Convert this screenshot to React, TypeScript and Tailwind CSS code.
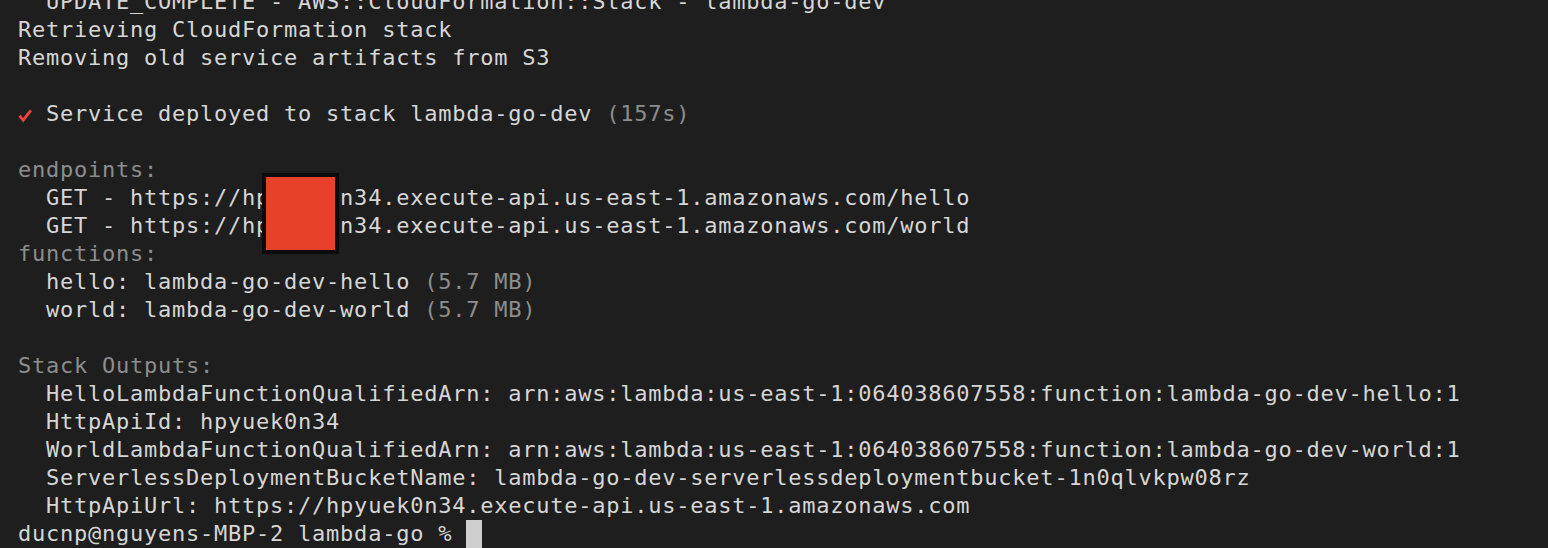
type Seg = { text: string; dim?: boolean };
type Line = { segs: Seg[]; check?: boolean };

const url = "https://hpyuek0n34.execute-api.us-east-1.amazonaws.com";

const lines: Line[] = [
  { segs: [{ text: "  UPDATE_COMPLETE - AWS::CloudFormation::Stack - lambda-go-dev" }] },
  { segs: [{ text: "Retrieving CloudFormation stack" }] },
  { segs: [{ text: "Removing old service artifacts from S3" }] },
  { segs: [] },
  { check: true, segs: [{ text: " Service deployed to stack lambda-go-dev " }, { text: "(157s)", dim: true }] },
  { segs: [] },
  { segs: [{ text: "endpoints:", dim: true }] },
  { segs: [{ text: `  GET - ${url}/hello` }] },
  { segs: [{ text: `  GET - ${url}/world` }] },
  { segs: [{ text: "functions:", dim: true }] },
  { segs: [{ text: "  hello: lambda-go-dev-hello " }, { text: "(5.7 MB)", dim: true }] },
  { segs: [{ text: "  world: lambda-go-dev-world " }, { text: "(5.7 MB)", dim: true }] },
  { segs: [] },
  { segs: [{ text: "Stack Outputs:", dim: true }] },
  { segs: [{ text: "  HelloLambdaFunctionQualifiedArn: arn:aws:lambda:us-east-1:064038607558:function:lambda-go-dev-hello:1" }] },
  { segs: [{ text: "  HttpApiId: hpyuek0n34" }] },
  { segs: [{ text: "  WorldLambdaFunctionQualifiedArn: arn:aws:lambda:us-east-1:064038607558:function:lambda-go-dev-world:1" }] },
  { segs: [{ text: "  ServerlessDeploymentBucketName: lambda-go-dev-serverlessdeploymentbucket-1n0qlvkpw08rz" }] },
  { segs: [{ text: `  HttpApiUrl: ${url}` }] },
];

const CheckMark = () => (
  <span className="inline-block w-[14px] h-[28px] align-top relative">
    <svg viewBox="0 0 14 14" className="absolute left-0 top-[9px] w-[14px] h-[14px]">
      <path d="M0.3 7.6 L2.9 5.7 L5 8.9 L11.8 0.6 L14 2.3 L5.2 13.4 Z" fill="#e8433d" />
    </svg>
  </span>
);

const App = () => {
  return (
    <div
      className="relative w-full h-[548px] overflow-hidden bg-[#1e1e1e] text-[#d6d6d6]"
      style={{ fontFamily: '"DejaVu Sans Mono", "Liberation Mono", monospace' }}
    >
      <div className="-mt-[12px] pl-[18px] text-[22px] leading-[28px] tracking-[0.76px] whitespace-pre">
        {lines.map((line, i) => (
          <div key={i} className="h-[28px]">
            {line.check && <CheckMark />}
            {line.segs.map((s, j) => (
              <span key={j} className={s.dim ? "text-[#8d8d8d]" : ""}>
                {s.text}
              </span>
            ))}
          </div>
        ))}
        <div className="h-[28px] flex items-stretch">
          <span>ducnp@nguyens-MBP-2 lambda-go % </span>
          <span className="w-[16px] bg-[#cfcfcf]" />
        </div>
      </div>

      {/* redacted part of the api id */}
      <div className="absolute left-[262px] top-[173px] w-[77px] h-[81px] border-[4px] border-[#0b0b0b] bg-[#e8412a]" />
    </div>
  );
};

export default App;
